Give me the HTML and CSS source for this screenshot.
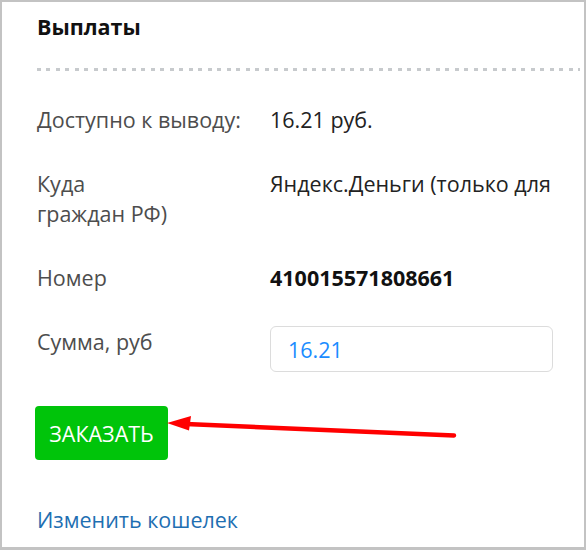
FILE: index.html
```html
<!DOCTYPE html>
<html lang="ru">

<head>
    <meta charset="UTF-8">
    <meta name="viewport" content="width=device-width, initial-scale=1.0">
    <title>Выплаты</title>
    <link rel="stylesheet" href="styles.css">
</head>

<body>
    <div class="frame">
        <div class="panel">
            <h2 class="panel-title">Выплаты</h2>
            <div class="dots"></div>

            <div class="row">
                <div class="label">Доступно к выводу:</div>
                <div class="value">16.21 руб.</div>
            </div>

            <div class="row">
                <div class="label">Куда<br>граждан РФ)</div>
                <div class="value">Яндекс.Деньги (только для</div>
            </div>

            <div class="row">
                <div class="label">Номер</div>
                <div class="value value-bold">410015571808661</div>
            </div>

            <div class="row">
                <div class="label">Сумма, руб</div>
                <div class="value">
                    <input type="text" class="amount" value="16.21">
                </div>
            </div>

            <button type="button" class="btn">ЗАКАЗАТЬ</button>

            <div class="change-link">
                <a href="#">Изменить кошелек</a>
            </div>
        </div>

        <!-- red annotation arrow -->
        <svg class="arrow" width="586" height="550" viewBox="0 0 586 550">
            <path d="M186 424 L454 435.5" stroke="#ff0000" stroke-width="4.5" stroke-linecap="round" fill="none" />
            <path d="M167 423 L191 416 L189 430.5 Z" fill="#ff0000" />
        </svg>
    </div>
</body>

</html>
```

FILE: styles.css
```css
* {
    margin: 0;
    padding: 0;
    box-sizing: border-box;
    font-family: 'Open Sans', 'Noto Sans', sans-serif;
}

body {
    background-color: white;
}

.frame {
    position: relative;
    width: 586px;
    height: 550px;
    border: 2px solid #c3c3c3;
    border-bottom-width: 3px;
    overflow: hidden;
}

.panel {
    padding: 10px 4px 0 35px;
}

.panel-title {
    color: #111;
    font-size: 21.5px;
    font-weight: 700;
    line-height: 30px;
}

.dots {
    height: 3px;
    margin-top: 26px;
    margin-bottom: 34px;
    background-image: repeating-linear-gradient(to right, #c7cacd 0, #c7cacd 4px, transparent 4px, transparent 9.5px);
}

.row {
    display: flex;
    margin-bottom: 34px;
    font-size: 21.5px;
    line-height: 30px;
}

.label {
    width: 233px;
    flex-shrink: 0;
    color: #4d4d4d;
}

.value {
    color: #222;
    white-space: nowrap;
}

.value-bold {
    font-weight: 700;
    color: #111;
}

.amount {
    width: 283px;
    height: 46px;
    margin-top: -1px;
    padding: 0 17px;
    border: 1px solid #dcdcdc;
    border-radius: 6px;
    font-size: 21.5px;
    color: #1a8cff;
    outline: none;
}

.btn {
    display: block;
    background-color: #00c40a;
    color: white;
    border: none;
    border-radius: 4px;
    width: 133px;
    height: 54px;
    margin-left: -2px;
    font-size: 21.5px;
    cursor: pointer;
}

.change-link {
    margin-top: 45px;
    font-size: 21.5px;
    line-height: 30px;
}

.change-link a {
    color: #1f6fb2;
    text-decoration: none;
}

.arrow {
    position: absolute;
    left: -2px;
    top: -2px;
    pointer-events: none;
}
```
